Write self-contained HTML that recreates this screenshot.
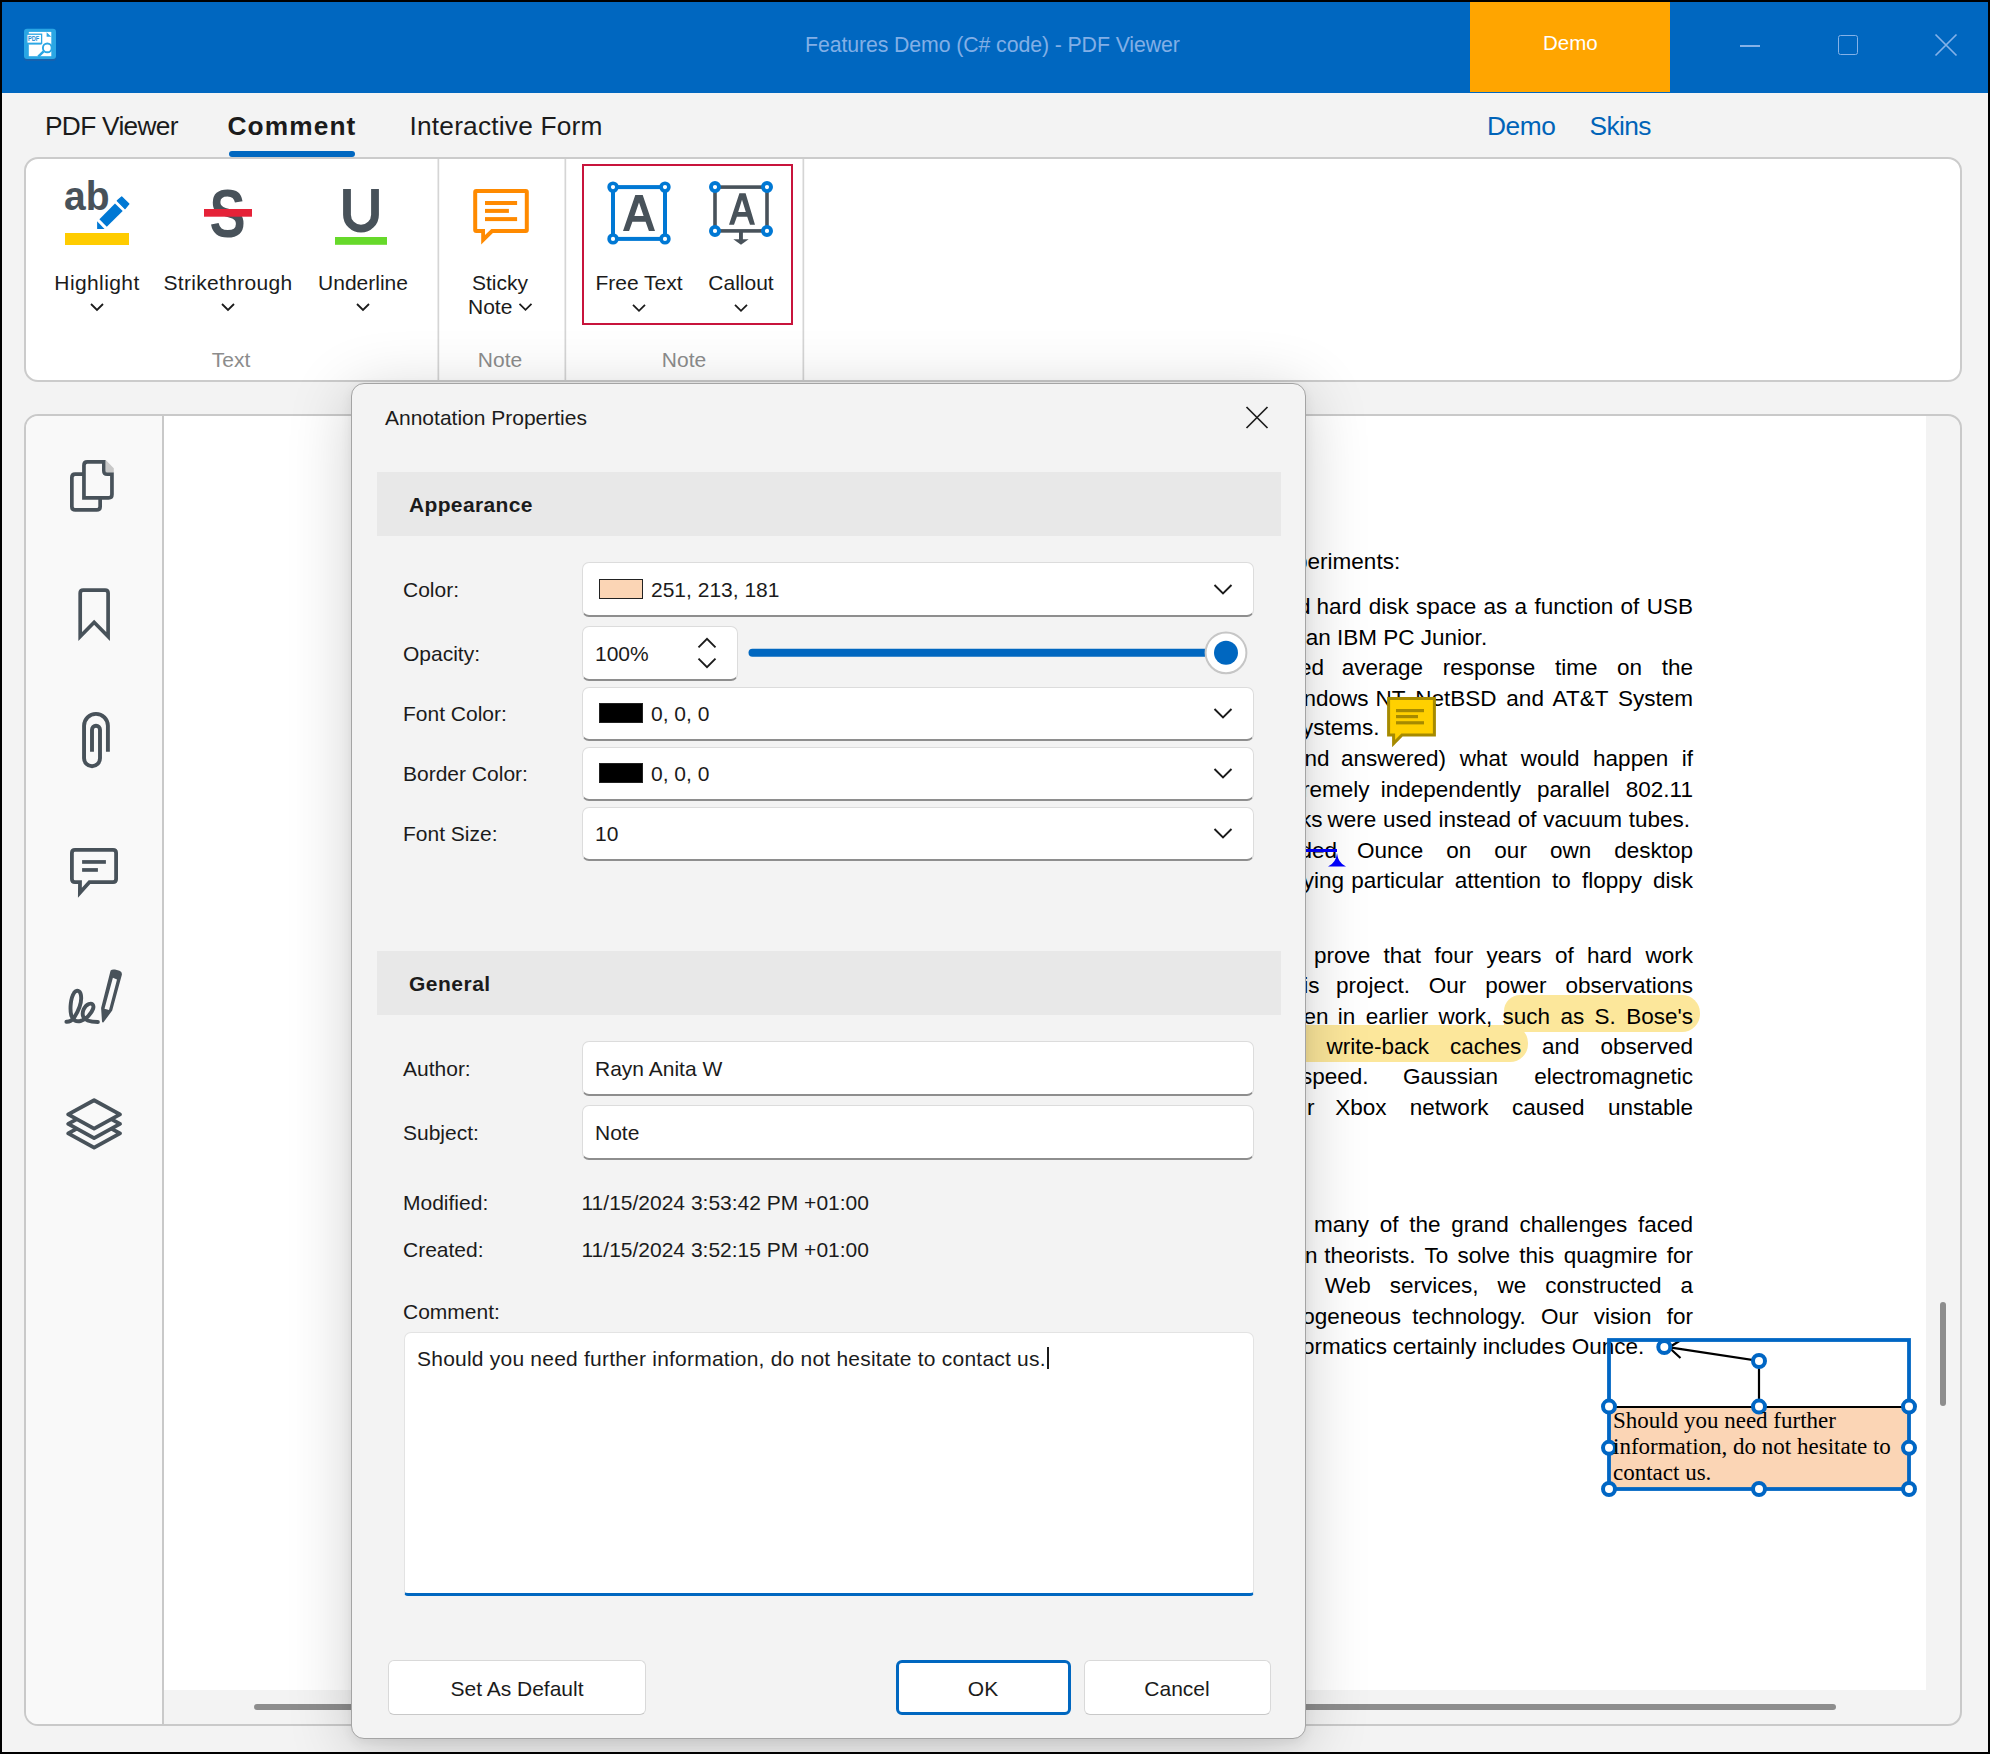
<!DOCTYPE html>
<html><head><meta charset="utf-8">
<style>
*{box-sizing:border-box;margin:0;padding:0}
html,body{width:1990px;height:1754px;overflow:hidden;background:#000}
body{position:relative;font-family:"Liberation Sans",sans-serif;color:#1b1b1b}
.a{position:absolute}
.t{position:absolute;white-space:pre;line-height:1}
#win{position:absolute;left:2px;top:2px;width:1986px;height:1750px;background:#f3f3f3;overflow:hidden}
</style></head>
<body>
<div id="win"></div>

<!-- TITLE BAR -->
<div class="a" style="left:2px;top:2px;width:1986px;height:90.6px;background:#0067c0"></div>
<!-- app icon -->
<svg class="a" style="left:22px;top:27px" width="38" height="38" viewBox="0 0 38 38">
  <rect x="2" y="3.6" width="32" height="30.4" rx="3" fill="#1d5fa8" opacity="0.75"/>
  <rect x="2" y="1.8" width="32" height="30.2" rx="3" fill="#2aa6e4"/>
  <path d="M6.8 4.9 H29.3 V29.2 H6.8 Z" fill="#fff"/><path d="M24.6 5.2 V9.8 H29.3 Z" fill="#2aa6e4"/>
  <rect x="4.8" y="7.2" width="14.8" height="9.1" fill="#fff" stroke="#2aa6e4" stroke-width="1.3"/>
  <rect x="6.8" y="16.3" width="12.8" height="1.3" fill="#2aa6e4"/>
  <text x="5.9" y="13.9" font-family="Liberation Sans" font-weight="700" font-size="6.4" fill="#1f8fd8" textLength="11.4" lengthAdjust="spacingAndGlyphs">PDF</text>
  <circle cx="25.3" cy="20.9" r="4.4" fill="#fff" stroke="#2aa6e4" stroke-width="1.9"/>
  <path d="M21.6 24.4 L16.2 29.6" stroke="#2aa6e4" stroke-width="2.4"/>
</svg>
<div class="t" style="left:805px;top:35px;font-size:21.3px;letter-spacing:-0.1px;color:#82afe6">Features Demo (C# code) - PDF Viewer</div>
<div class="a" style="left:1470px;top:2px;width:200px;height:90px;background:#ffa500"></div>
<div class="t" style="left:1543px;top:33px;font-size:20.5px;color:#fff">Demo</div>
<!-- window controls -->
<div class="a" style="left:1740px;top:45px;width:20px;height:1.5px;background:#84b2e8"></div>
<div class="a" style="left:1838px;top:35px;width:20px;height:20px;border:1.8px solid #84b2e8;border-radius:2.5px"></div>
<svg class="a" style="left:1934px;top:33px" width="24" height="24"><path d="M1.5 1.5 L22.5 22.5 M22.5 1.5 L1.5 22.5" stroke="#84b2e8" stroke-width="1.7"/></svg>

<!-- TABS -->
<div class="t" style="left:45px;top:112.7px;font-size:26.3px;letter-spacing:-0.7px;color:#1b1b1b">PDF Viewer</div>
<div class="t" style="left:227.5px;top:112.7px;font-size:26.3px;font-weight:700;letter-spacing:1.1px;color:#1b1b1b">Comment</div>
<div class="a" style="left:229px;top:151px;width:126px;height:5.5px;border-radius:3px;background:#0067c0"></div>
<div class="t" style="left:409.5px;top:112.7px;font-size:26.3px;letter-spacing:0.2px;color:#1b1b1b">Interactive Form</div>
<div class="t" style="left:1487px;top:112.7px;font-size:26.3px;letter-spacing:-0.4px;color:#0063b8">Demo</div>
<div class="t" style="left:1589.5px;top:112.7px;font-size:26.3px;letter-spacing:-0.6px;color:#0063b8">Skins</div>
<!-- RIBBON PANEL -->
<div class="a" style="left:24px;top:157px;width:1938px;height:224.7px;background:#fff;border:2px solid #cbcbcb;border-radius:14px"></div>


<!-- RIBBON CONTENT -->
<svg class="a" style="left:0;top:0" width="1990" height="400" viewBox="0 0 1990 400">
  <g fill="#d5d5d5">
    <rect x="437.5" y="159" width="1.7" height="221"/>
    <rect x="564.5" y="159" width="1.7" height="221"/>
    <rect x="802.5" y="159" width="1.7" height="221"/>
  </g>
  <!-- highlight -->
  <text x="64" y="209.5" font-family="Liberation Sans" font-weight="700" font-size="41" fill="#48525a" textLength="45.5" lengthAdjust="spacingAndGlyphs">ab</text>
  <rect x="65" y="233" width="64" height="12" fill="#ffcc00"/>
  <polygon points="97.1,221.3 97.1,228.9 104.5,228.9" fill="#0078d4"/>
  <polygon points="99.4,219.3 115,203.4 122.7,211 106.8,226.7" fill="#0078d4"/>
  <polygon points="117.3,200.8 121.7,196.9 128.9,203.9 125,208.7" fill="#0078d4" stroke="#0078d4" stroke-width="1.2" stroke-linejoin="round"/>
  <!-- strikethrough -->
  <text x="0" y="237" font-family="Liberation Sans" font-weight="700" font-size="68.5" fill="#48525a" transform="translate(209.5 0) scale(0.79 1)">S</text>
  <rect x="204" y="209" width="48" height="7.7" fill="#e52238"/>
  <!-- underline -->
  <path d="M347 189 V214.7 A14 14 0 0 0 375 214.7 V189" fill="none" stroke="#48525a" stroke-width="7.8"/>
  <rect x="335" y="237" width="52" height="7.8" fill="#66d92a"/>
  <!-- sticky note -->
  <path fill="#ff8a00" fill-rule="evenodd" d="M476.2 189 H525.8 Q528.8 189 528.8 192 V229.9 Q528.8 232.9 525.8 232.9 H492.9 L481.2 244.6 V232.9 H476.2 Q473.2 232.9 473.2 229.9 V192 Q473.2 189 476.2 189 Z M477.2 193 V228.9 H485 V235 L491.3 228.9 H524.8 V193 Z"/>
  <rect x="485" y="201" width="32.1" height="4" fill="#ff8a00"/>
  <rect x="485" y="208.9" width="23.9" height="4" fill="#ff8a00"/>
  <rect x="485" y="217.1" width="32.1" height="4" fill="#ff8a00"/>
  <!-- free text -->
  <rect x="613" y="187.1" width="52" height="51.8" fill="none" stroke="#0078d4" stroke-width="4"/>
  <g fill="#fff" stroke="#0078d4" stroke-width="3.6">
    <circle cx="613" cy="187.1" r="3.9"/><circle cx="665" cy="187.1" r="3.9"/>
    <circle cx="613" cy="238.9" r="3.9"/><circle cx="665" cy="238.9" r="3.9"/>
  </g>
  <path d="M623 230.9 L635.3 195 H642.7 L655 230.9 H648.9 L645.6 221.8 H632.4 L629.1 230.9 Z M634.4 216 H643.6 L639 202.5 Z" fill="#48525a" fill-rule="evenodd"/>
  <!-- callout -->
  <rect x="715" y="187.1" width="52" height="43.8" fill="none" stroke="#48525a" stroke-width="3.6"/>
  <rect x="739" y="231" width="3.9" height="9" fill="#48525a"/>
  <polygon points="733.3,239.3 748.6,239.3 741,244.8" fill="#48525a"/>
  <g fill="#fff" stroke="#0078d4" stroke-width="3.9">
    <circle cx="715" cy="187.1" r="4.05"/><circle cx="767" cy="187.1" r="4.05"/>
    <circle cx="715" cy="230.9" r="4.05"/><circle cx="767" cy="230.9" r="4.05"/>
  </g>
  <path d="M729 224.7 L739.4 193.2 H745.6 L755 224.7 H750 L747.2 216.8 H736.9 L734 224.7 Z M738.2 211.9 H745.8 L742 199.8 Z" fill="#48525a" fill-rule="evenodd"/>
  <!-- chevrons -->
  <g fill="none" stroke="#1b1b1b" stroke-width="1.8">
    <path d="M91 304 L97 310 L103 304"/>
    <path d="M222 304 L228 310 L234 304"/>
    <path d="M357 304 L363 310 L369 304"/>
    <path d="M519.5 303.8 L525.5 309.8 L531.5 303.8"/>
    <path d="M633 304.8 L639 310.8 L645 304.8"/>
    <path d="M735 304.8 L741 310.8 L747 304.8"/>
  </g>
  <!-- red selection -->
  <rect x="583" y="165" width="209" height="159" fill="none" stroke="#c8143c" stroke-width="2"/>
</svg>
<div class="t" style="left:0;width:194px;top:271.9px;font-size:21px;text-align:center;letter-spacing:0.4px">Highlight</div>
<div class="t" style="left:128px;width:200px;top:271.9px;font-size:21px;text-align:center;letter-spacing:0.33px">Strikethrough</div>
<div class="t" style="left:263px;width:200px;top:271.9px;font-size:21px;text-align:center">Underline</div>
<div class="t" style="left:400px;width:200px;top:271.9px;font-size:21px;text-align:center">Sticky</div>
<div class="t" style="left:468px;top:296px;font-size:21px">Note</div>
<div class="t" style="left:539px;width:200px;top:271.9px;font-size:21px;text-align:center">Free Text</div>
<div class="t" style="left:641px;width:200px;top:271.9px;font-size:21px;text-align:center">Callout</div>
<div class="t" style="left:131px;width:200px;top:349.2px;font-size:21px;text-align:center;color:#8c8c8c">Text</div>
<div class="t" style="left:400px;width:200px;top:349.2px;font-size:21px;text-align:center;color:#8c8c8c">Note</div>
<div class="t" style="left:584px;width:200px;top:349.2px;font-size:21px;text-align:center;color:#8c8c8c">Note</div>

<!-- MAIN PANEL -->
<div class="a" style="left:24px;top:414px;width:1938px;height:1312px;background:#f3f3f3;border:2px solid #c9c9c9;border-radius:14px;overflow:hidden">
  <div class="a" style="left:0;top:0;width:136px;height:1312px;background:#f9f9f9"></div>
  <div class="a" style="left:136px;top:0;width:2px;height:1312px;background:#c9c9c9"></div>
  <div class="a" style="left:138px;top:0;width:1762px;height:1274px;background:#fff"></div>
</div>


<!-- SIDEBAR ICONS -->
<svg class="a" style="left:0;top:0" width="200" height="1200" viewBox="0 0 200 1200">
  <g fill="none" stroke="#48525a" stroke-width="3.7" stroke-linejoin="miter">
    <!-- pages -->
    <path d="M83.95 474.15 H75.2 Q71.85 474.15 71.85 477.5 V506.6 Q71.85 509.95 75.2 509.95 H96.8 Q100.15 509.95 100.15 506.6 V497.85"/>
    <path d="M83.95 497.85 V465.2 Q83.95 461.85 87.3 461.85 H103.85 V470.8 Q103.85 474.15 107.2 474.15 H111.95 V494.5 Q111.95 497.85 108.6 497.85 Z"/>
  </g>
  <polygon points="105.7,460 113.8,468.3 113.8,472.3 105.7,472.3" fill="#c8c8c8"/>
  <!-- bookmark -->
  <path d="M80.2 636.5 V593 Q80.2 590.05 83.2 590.05 H105.1 Q108.1 590.05 108.1 593 V636.5 L94.15 622.3 Z" fill="none" stroke="#48525a" stroke-width="3.7" stroke-linejoin="miter" stroke-miterlimit="10"/>
  <!-- paperclip -->
  <path d="M92 751.8 V729.8 A4 4 0 0 1 100 729.8 V758.2 A7.9 7.9 0 0 1 84.05 758.2 V725.8 A11.9 11.9 0 0 1 107.9 725.8 V751.8" fill="none" stroke="#48525a" stroke-width="3.9"/>
  <!-- comment -->
  <path d="M80 882.1 H75 Q71.9 882.1 71.9 879 V853 Q71.9 849.9 75 849.9 H113 Q116.1 849.9 116.1 853 V879 Q116.1 882.1 113 882.1 H89.5 L79.9 892.8 Z" fill="none" stroke="#48525a" stroke-width="3.8" stroke-linejoin="miter" stroke-miterlimit="10"/>
  <rect x="82.1" y="860.1" width="23.8" height="3.7" fill="#48525a"/>
  <rect x="82.1" y="868.1" width="15.8" height="3.7" fill="#48525a"/>
  <!-- signature -->
  <path d="M66.4 1021.8 C69.5 1022 72 1020.5 74.5 1017 C79.5 1009 82 1000 80.8 994.5 C80 990.5 76.5 989.5 74.3 992.5 C70.5 998 69.8 1009 71.2 1015 C72.5 1020.5 76.5 1022 80.5 1021 C86 1019.5 91.5 1013.5 93.2 1008.5 C94.2 1004.8 92 1002.8 88.8 1004 C84 1006 81.5 1012.5 83.3 1016.8 C85 1021 90 1022 97.9 1022" fill="none" stroke="#48525a" stroke-width="3.9" stroke-linecap="round"/>
  <path fill="#48525a" fill-rule="evenodd" d="M110.6 970.5 Q112 969 115 969.5 L119.5 970.8 Q122.5 972 121.8 975 L112.2 1010.6 L103.5 1022.3 Q102.5 1023 102 1021.5 L101.1 1007.9 Z M112.9 977.8 L117 979.4 L109 1010 L104.5 1008.8 Z"/>
  <!-- layers -->
  <g fill="none" stroke="#48525a" stroke-width="3.9" stroke-linejoin="round">
    <path d="M68.2 1114.4 L94.1 1100.2 L120 1114.4 L94.1 1128.6 Z"/>
    <path d="M76.9 1119.15 L68.2 1123.9 L94.1 1138.1 L120 1123.9 L111.3 1119.15"/>
    <path d="M76.9 1128.65 L68.2 1133.4 L94.1 1147.6 L120 1133.4 L111.3 1128.65"/>
  </g>
</svg>
<!-- page bottom scrollbar -->
<div class="a" style="left:254px;top:1704px;width:1582px;height:6px;border-radius:3px;background:#8d8d8d"></div>
<div class="a" style="left:1940px;top:1302px;width:6px;height:104px;border-radius:3px;background:#8d8d8d"></div>

<!-- PAGE TEXT -->
<div class="a" style="left:1503.5px;top:994.8px;width:196.3px;height:37.4px;background:#fce79b;border-radius:16px 18px 18px 4px"></div>
<div class="a" style="left:1290px;top:1025px;width:237.6px;height:37.4px;background:#fce79b;border-radius:0 18px 18px 0"></div>
<style>.pl{position:absolute;font-size:22.5px;line-height:1;white-space:nowrap;color:#000}.pj{text-align:justify;text-align-last:justify}.pr{text-align:right}</style>
<div class="pl" style="left:1295.1px;top:550.8px">periments:</div>
<div class="pl pr" style="left:1010.5px;width:300px;top:595.8px">d</div>
<div class="pl pj" style="left:1316.4px;width:376.6px;top:595.8px">hard disk space as a function of USB</div>
<div class="pl" style="left:1305.8px;top:626.8px">an IBM PC Junior.</div>
<div class="pl pr" style="left:1024px;width:300px;top:656.8px">ed</div>
<div class="pl pj" style="left:1341.8px;width:351.2px;top:656.8px">average response time on the</div>
<div class="pl pr" style="left:1068.5px;width:300px;top:687.5px">ndows</div>
<div class="pl pj" style="left:1375.6px;width:317.4px;top:687.5px">NT NetBSD and AT&amp;T System</div>
<div class="pl pr" style="left:1079.5px;width:300px;top:716.8px">ystems.</div>
<div class="pl pr" style="left:1029.5px;width:300px;top:747.8px">nd</div>
<div class="pl pj" style="left:1341px;width:352px;top:747.8px">answered) what would happen if</div>
<div class="pl pr" style="left:1069.5px;width:300px;top:778.8px">remely</div>
<div class="pl pj" style="left:1380.8px;width:312.2px;top:778.8px">independently parallel 802.11</div>
<div class="pl pr" style="left:1022.5px;width:300px;top:808.8px">ks</div>
<div class="pl pj" style="left:1327.5px;width:362.5px;top:808.8px">were used instead of vacuum tubes.</div>
<div class="pl pr" style="left:1037px;width:300px;top:839.5px">ded</div>
<div class="pl pj" style="left:1357px;width:336px;top:839.5px">Ounce on our own desktop</div>
<div class="pl pr" style="left:1044px;width:300px;top:869.8px">ying</div>
<div class="pl pj" style="left:1351.2px;width:341.8px;top:869.8px">particular attention to floppy disk</div>
<div class="pl pj" style="left:1313.9px;width:379.1px;top:944.8px">prove that four years of hard work</div>
<div class="pl pr" style="left:1019.5px;width:300px;top:974.8px">is</div>
<div class="pl pj" style="left:1336.1px;width:356.9px;top:974.8px">project. Our power observations</div>
<div class="pl pr" style="left:1028.5px;width:300px;top:1005.6px">en</div>
<div class="pl pj" style="left:1337.8px;width:355.2px;top:1005.6px">in earlier work, such as S. Bose's</div>
<div class="pl pj" style="left:1326.5px;width:366.5px;top:1035.8px">write-back caches and observed</div>
<div class="pl pr" style="left:1068.5px;width:300px;top:1066.4px">speed.</div>
<div class="pl pj" style="left:1403px;width:290px;top:1066.4px">Gaussian electromagnetic</div>
<div class="pl pr" style="left:1014.5px;width:300px;top:1096.8px">r</div>
<div class="pl pj" style="left:1335.2px;width:357.8px;top:1096.8px">Xbox network caused unstable</div>
<div class="pl pj" style="left:1313.9px;width:379.1px;top:1213.8px">many of the grand challenges faced</div>
<div class="pl pr" style="left:1017.5px;width:300px;top:1244.8px">n</div>
<div class="pl pj" style="left:1324.3px;width:368.7px;top:1244.8px">theorists. To solve this quagmire for</div>
<div class="pl pj" style="left:1324.8px;width:368.2px;top:1275.3px">Web services, we constructed a</div>
<div class="pl pr" style="left:1101px;width:300px;top:1305.8px">ogeneous</div>
<div class="pl pj" style="left:1412.3px;width:280.7px;top:1305.8px">technology. Our vision for</div>
<div class="pl pr" style="left:1087px;width:300px;top:1335.8px">ormatics</div>
<div class="pl" style="left:1392.8px;top:1335.8px">certainly includes Ounce.</div>

<!-- PAGE ANNOTATIONS -->
<svg class="a" style="left:0;top:0" width="1990" height="1754" viewBox="0 0 1990 1754">
  <!-- sticky note on page -->
  <path d="M1388.6 698.6 H1434.4 V735 H1402 L1393.6 743.6 V735 H1388.6 Z" fill="#ffd000" stroke="#a68a00" stroke-width="3" stroke-linejoin="miter"/>
  <rect x="1396" y="709" width="28" height="3.2" fill="#a68a00"/>
  <rect x="1396" y="715" width="22" height="3.2" fill="#a68a00"/>
  <rect x="1396" y="721.2" width="28" height="3.2" fill="#a68a00"/>
  <!-- strikeout -->
  <rect x="1300" y="849" width="37" height="3" fill="#0000ff"/>
  <path d="M1337 853 Q1338 863 1346 866.5 H1328 Q1336 863 1337 853 Z" fill="#0000ff"/>
  <!-- callout annotation -->
  <rect x="1609" y="1407" width="300" height="82" fill="#fbd5b5"/>
  <line x1="1609" y1="1407" x2="1909" y2="1407" stroke="#000" stroke-width="2.2"/>
  <path d="M1668 1347.2 L1759 1361 V1407" fill="none" stroke="#000" stroke-width="2.2"/>
  <path d="M1681 1340 L1669 1347.5 L1680.5 1358" fill="none" stroke="#000" stroke-width="2.2"/>
  <rect x="1609" y="1340" width="300" height="149" fill="none" stroke="#0066c4" stroke-width="3.8"/>
  <g fill="#fff" stroke="#0066c4" stroke-width="4">
    <circle cx="1664.3" cy="1347" r="6"/>
    <circle cx="1759" cy="1361" r="6"/>
    <circle cx="1609" cy="1406.6" r="6"/><circle cx="1759" cy="1406.6" r="6"/><circle cx="1909" cy="1406.6" r="6"/>
    <circle cx="1609" cy="1447.8" r="6"/><circle cx="1909" cy="1447.8" r="6"/>
    <circle cx="1609" cy="1489" r="6"/><circle cx="1759" cy="1489" r="6"/><circle cx="1909" cy="1489" r="6"/>
  </g>
</svg>
<div class="a" style="left:1613px;top:1407.5px;font-family:'Liberation Serif',serif;font-size:23px;line-height:26.4px;color:#000;white-space:pre">Should you need further
information, do not hesitate to
contact us.</div>

<!-- DIALOG -->
<div id="dlg" class="a" style="left:351px;top:383px;width:955px;height:1356px;background:#f3f3f3;border:1.7px solid #a4a4a4;border-radius:13px;box-shadow:0 10px 64px rgba(0,0,0,0.19), 0 4px 12px rgba(0,0,0,0.07)"></div>


<style>
.fld{position:absolute;left:581.5px;width:672.5px;background:#fff;border:1.4px solid #dcdcdc;border-bottom:2px solid #8e8e8e;border-radius:7px}
.lbl{position:absolute;left:403px;font-size:21px;white-space:pre;line-height:1}
.btn{position:absolute;top:1660px;height:54.5px;background:#fff;border:1.5px solid #d9d9d9;border-bottom-color:#c8c8c8;border-radius:6px}
.sw{position:absolute;left:599px;width:44px;height:20px;border:1.3px solid #222}
</style>
<!-- DIALOG CONTENT -->
<div class="t" style="left:385px;top:407px;font-size:21px">Annotation Properties</div>
<svg class="a" style="left:1244px;top:404px" width="26" height="26"><path d="M2.5 3 L23.5 24 M23.5 3 L2.5 24" stroke="#1b1b1b" stroke-width="1.7"/></svg>
<div class="a" style="left:377px;top:472px;width:904px;height:64px;background:#e8e8e8"></div>
<div class="t" style="left:409px;top:494px;font-size:21px;font-weight:700;letter-spacing:0.35px">Appearance</div>
<div class="a" style="left:377px;top:951px;width:904px;height:64px;background:#e8e8e8"></div>
<div class="t" style="left:409px;top:972.6px;font-size:21px;font-weight:700;letter-spacing:0.5px">General</div>

<div class="lbl" style="top:579.1px">Color:</div>
<div class="lbl" style="top:642.9px">Opacity:</div>
<div class="lbl" style="top:703.2px">Font Color:</div>
<div class="lbl" style="top:763.2px">Border Color:</div>
<div class="lbl" style="top:823px">Font Size:</div>
<div class="lbl" style="top:1058.2px">Author:</div>
<div class="lbl" style="top:1122px">Subject:</div>
<div class="lbl" style="top:1191.8px">Modified:</div>
<div class="lbl" style="top:1238.7px">Created:</div>
<div class="lbl" style="top:1300.5px">Comment:</div>

<div class="fld" style="top:561.5px;height:55px"></div>
<div class="fld" style="top:626px;width:156.5px;height:54.5px"></div>
<div class="fld" style="top:686.5px;height:54px"></div>
<div class="fld" style="top:746.5px;height:54px"></div>
<div class="fld" style="top:806.5px;height:54px"></div>
<div class="fld" style="top:1041px;height:54.5px"></div>
<div class="fld" style="top:1105px;height:54.5px"></div>

<div class="sw" style="top:579px;background:#fbd5b5"></div>
<div class="sw" style="top:703px;background:#000"></div>
<div class="sw" style="top:763px;background:#000"></div>
<div class="lbl" style="left:651px;top:579.1px">251, 213, 181</div>
<div class="lbl" style="left:595px;top:642.9px">100%</div>
<div class="lbl" style="left:651px;top:703.2px">0, 0, 0</div>
<div class="lbl" style="left:651px;top:763.2px">0, 0, 0</div>
<div class="lbl" style="left:595px;top:823px">10</div>
<div class="lbl" style="left:595px;top:1058.2px">Rayn Anita W</div>
<div class="lbl" style="left:595px;top:1122px">Note</div>
<div class="lbl" style="left:581.5px;top:1191.8px">11/15/2024 3:53:42 PM +01:00</div>
<div class="lbl" style="left:581.5px;top:1238.7px">11/15/2024 3:52:15 PM +01:00</div>

<svg class="a" style="left:0;top:0" width="1990" height="1754" viewBox="0 0 1990 1754">
  <g fill="none" stroke="#1b1b1b" stroke-width="1.9">
    <path d="M1214.5 585 L1223 593.5 L1231.5 585"/>
    <path d="M1214.5 709 L1223 717.5 L1231.5 709"/>
    <path d="M1214.5 769 L1223 777.5 L1231.5 769"/>
    <path d="M1214.5 829 L1223 837.5 L1231.5 829"/>
    <path d="M698.5 647.3 L707 638.8 L715.5 647.3"/>
    <path d="M698.5 658.6 L707 667.1 L715.5 658.6"/>
  </g>
  <line x1="752.5" y1="652.8" x2="1222" y2="652.8" stroke="#0067c0" stroke-width="8" stroke-linecap="round"/>
  <circle cx="1226" cy="652.8" r="20.4" fill="#fff" stroke="#c6c6c6" stroke-width="2"/>
  <circle cx="1226" cy="652.8" r="12" fill="#0067c0"/>
</svg>

<div class="a" style="left:404px;top:1332px;width:850px;height:263.5px;background:#fff;border:1px solid #e3e3e3;border-bottom:3px solid #0067c0;border-radius:7px 7px 4px 4px"></div>
<div class="lbl" style="left:417px;top:1348px;letter-spacing:0.22px">Should you need further information, do not hesitate to contact us.</div>
<div class="a" style="left:1047px;top:1347px;width:1.6px;height:22px;background:#1b1b1b"></div>

<div class="btn" style="left:388px;width:258px"></div>
<div class="btn" style="left:895.5px;width:175px;border:3px solid #0067c0"></div>
<div class="btn" style="left:1083.5px;width:187px"></div>
<div class="t" style="left:388px;width:258px;top:1677.6px;font-size:21px;text-align:center">Set As Default</div>
<div class="t" style="left:895.5px;width:175px;top:1677.6px;font-size:21px;text-align:center">OK</div>
<div class="t" style="left:1083.5px;width:187px;top:1677.6px;font-size:21px;text-align:center">Cancel</div>

</body></html>
